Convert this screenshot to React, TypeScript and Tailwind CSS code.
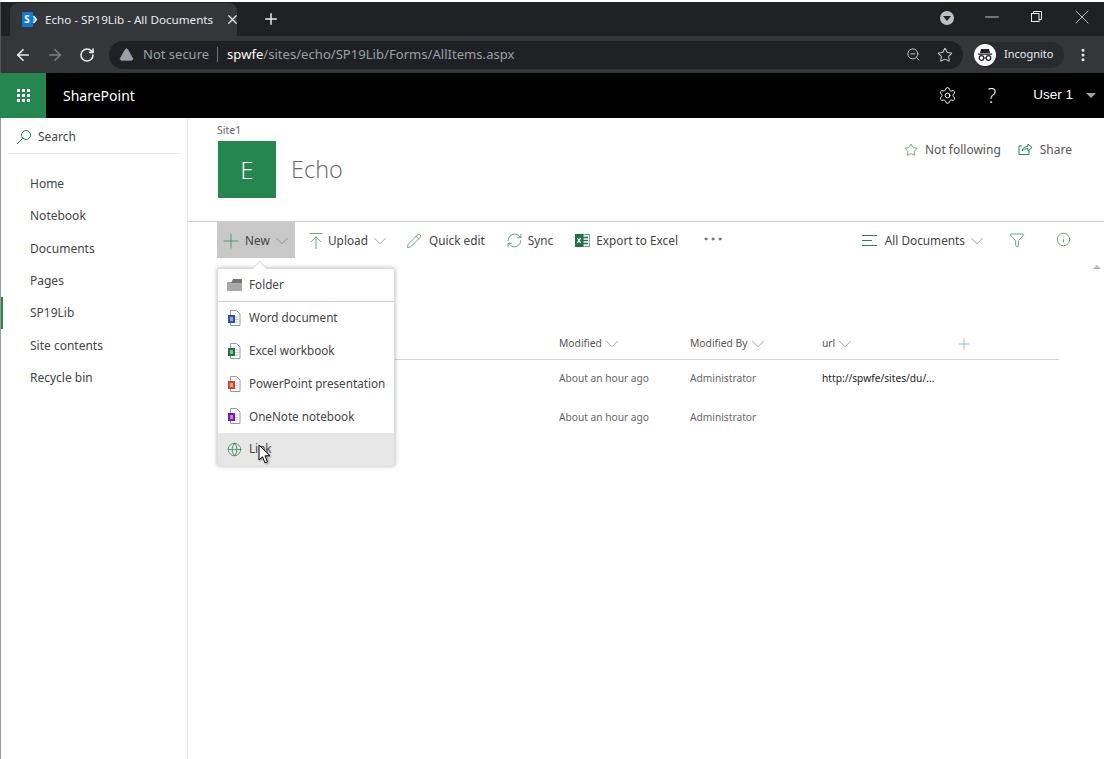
import React from 'react';
import { ArrowLeft, ArrowRight, RotateCw, TriangleAlert, ZoomOut, Star, X, Plus, Minus, EllipsisVertical, Settings, ChevronDown, ArrowUpToLine, Pencil, RefreshCw, Filter, Info, Globe, Ellipsis } from 'lucide-react';

const font = 'font-["Noto_Sans","Open_Sans",sans-serif]';

const navItems = [
  { label: 'Home', top: 'h-[32px]' },
  { label: 'Notebook', top: 'h-[32px]' },
  { label: 'Documents', top: 'h-[33px]' },
  { label: 'Pages', top: 'h-[32px]' },
  { label: 'SP19Lib', top: 'h-[32px]', active: true },
  { label: 'Site contents', top: 'h-[33px]' },
  { label: 'Recycle bin', top: 'h-[32px]' },
];

const DocIcon = ({ color }: { color: string }) => (
  <svg width="14" height="16" viewBox="0 0 14 16" fill="none">
    <path d="M3.500 .5h6l3.500 3.500v11.500h-9.500z" fill="#fff" stroke="#9a9a9a" />
    <path d="M8 7h3.500M8 9.500h3.500M8 12h3.500" stroke="#c8c8c8" />
    <rect x="1" y="5" width="7" height="8" fill={color} />
    <rect x="3" y="7" width="3" height="4" fill="#fff" opacity="0.5" />
  </svg>
);

const ExcelIcon = () => (
  <svg width="15" height="15" viewBox="0 0 15 15">
    <rect x="5" y="1.500" width="9.500" height="12" fill="#fff" stroke="#7f9f8c" />
    <path d="M8 4.500h5M8 7.500h5M8 10.500h5" stroke="#217346" strokeWidth="1.500" />
    <rect x="0" y="1" width="8.500" height="13" fill="#217346" />
    <path d="M2.300 5l3.400 5M5.700 5l-3.400 5" stroke="#fff" strokeWidth="1.300" />
  </svg>
);

const MenuItem = ({ icon, label, hover, border }: { icon: React.ReactNode; label: string; hover?: boolean; border?: boolean }) => (
  <div className={`flex items-center h-[32.750px] pl-[9px] text-[11.700px] whitespace-nowrap text-[#444444] ${hover ? 'bg-[#e6e6e6]' : ''} ${border ? 'border-b border-[#d0d0d0]' : ''}`}>
    <span className="w-[22px] flex items-center">{icon}</span>
    {label}
  </div>
);

const ColHead = ({ label, w }: { label: string; w: string }) => (
  <div className={`${w} flex items-center text-[10.300px] text-[#555555]`}>
    {label}
    <ChevronDown size={22} strokeWidth={0.7} className="-ml-[1px] -my-[4px] text-[#777777]" />
  </div>
);

const Row = ({ url, h }: { url?: string; h: string }) => (
  <div className={`flex items-center ${h} pl-[342px] text-[10.200px] text-[#666666]`}>
    <div className="w-[131px]">About an hour ago</div>
    <div className="w-[132px]">Administrator</div>
    {url && <div className="text-[#222222]">{url}</div>}
  </div>
);

const ToolButton = ({ icon, label, chevron, className }: { icon: React.ReactNode; label: string; chevron?: boolean; className?: string }) => (
  <div className={`flex items-center h-full pt-[1px] text-[11.800px] text-[#444444] ${className || ''}`}>
    {icon}
    <span>{label}</span>
    {chevron && <ChevronDown size={22} strokeWidth={0.75} className="ml-[1px] text-[#777777]" />}
  </div>
);

export default function App() {
  return (
    <div className={`${font} w-[1104px] h-[759px] overflow-hidden bg-white flex flex-col relative`}>
      {/* browser chrome */}
      <div className="h-[2px] bg-white" />
      <div className="h-[34px] bg-[#202124] flex items-end pl-[9px] border-l border-[#555555]">
        <div className="w-[227px] h-[33px] bg-[#35363a] rounded-t-[8px] flex items-center pl-[11px] text-white">
          <svg width="17" height="17" viewBox="0 0 17 17" className="shrink-0">
            <path d="M9 3l7 5.500-7 5.500z" fill="#37c6d0" />
            <rect x="1" y="1" width="11" height="15" rx="1" fill="#0f78d4" />
            <text x="3.200" y="12" fontSize="10" fontWeight="700" fill="#fff">S</text>
            <path d="M12.500 5l3 3.500-3 3.500" stroke="#fff" strokeWidth="1.300" fill="none" />
          </svg>
          <span className="ml-[7px] text-[11.650px] whitespace-nowrap text-[#e8eaed]">Echo - SP19Lib - All Documents</span>
          <X size={15} strokeWidth={2} className="ml-[12px] shrink-0 text-[#e8eaed]" />
        </div>
        <Plus size={18} strokeWidth={2} className="ml-[25px] mb-[8px] text-[#e8eaed]" />
        <div className="flex-1" />
        <div className="h-full flex items-center mb-[1px]">
          <div className="w-[14px] h-[14px] rounded-full bg-[#bdc1c6] flex items-center justify-center mr-[27px]">
            <div className="w-0 h-0 border-l-[4px] border-r-[4px] border-t-[5px] border-l-transparent border-r-transparent border-t-[#202124]" />
          </div>
          <Minus size={22} strokeWidth={0.9} className="text-[#e8eaed] mr-[28px] -mt-[3px]" />
          <svg width="11" height="11" viewBox="0 0 11 11" fill="none" stroke="#e8eaed" className="mr-[28px] -mt-[3px]">
            <rect x=".5" y="2.500" width="7.500" height="8" />
            <path d="M2.500 2.500v-2h8v8h-2.500" />
          </svg>
          <X size={24} strokeWidth={0.8} className="text-[#e8eaed] mr-[10px] -mt-[3px]" />
        </div>
      </div>
      <div className="h-[37px] bg-[#35363a] flex items-center border-l border-[#555555]">
        <ArrowLeft size={18} strokeWidth={2.200} className="ml-[13px] text-[#e8eaed]" />
        <ArrowRight size={18} strokeWidth={2.200} className="ml-[14px] text-[#7c7f83]" />
        <RotateCw size={16} strokeWidth={2.400} className="ml-[15px] text-[#e8eaed]" />
        <div className="ml-[14px] w-[854px] h-[28px] rounded-full bg-[#202124] flex items-center pl-[10px] text-[13px] whitespace-nowrap">
          <TriangleAlert size={15} fill="#9aa0a6" strokeWidth={1.500} className="text-[#9aa0a6]" />
          <span className="ml-[9px] text-[#9aa0a6]">Not secure</span>
          <span className="ml-[8px] mr-[9px] h-[15px] w-px bg-[#70757a]" />
          <span className="text-[13.100px] text-white">spwfe</span>
          <span className="text-[13.100px] text-[#9aa0a6]">/sites/echo/SP19Lib/Forms/AllItems.aspx</span>
          <div className="flex-1" />
          <ZoomOut size={15} strokeWidth={1.600} className="text-[#bdc1c6]" />
          <Star size={16} strokeWidth={1.600} className="ml-[16px] mr-[10px] text-[#bdc1c6]" />
        </div>
        <div className="ml-[11px] w-[90px] h-[26px] rounded-full bg-[#292a2d] flex items-center text-[11px] text-[#e8eaed]">
          <div className="w-[22px] h-[22px] rounded-full bg-white flex items-center justify-center shrink-0">
            <svg width="16" height="14" viewBox="0 0 16 14">
              <path d="M4 1h8l1 4H3z" fill="#202124" />
              <rect x="1" y="5.500" width="14" height="1.300" fill="#202124" />
              <circle cx="4.500" cy="10" r="2.300" fill="none" stroke="#202124" strokeWidth="1.200" />
              <circle cx="11.500" cy="10" r="2.300" fill="none" stroke="#202124" strokeWidth="1.200" />
              <path d="M6.800 10h2.400" stroke="#202124" />
            </svg>
          </div>
          <span className="ml-[8px]">Incognito</span>
        </div>
        <EllipsisVertical size={16} strokeWidth={2.500} className="ml-[11px] text-[#e8eaed]" />
      </div>

      {/* suite bar */}
      <div className="h-[45px] bg-black flex items-center text-white shrink-0">
        <div className="w-[46px] h-full bg-[#25874f] flex items-center justify-center">
          <div className="grid grid-cols-3 gap-[2px]">
            {Array.from({ length: 9 }).map((_, i) => (
              <div key={i} className="w-[3px] h-[3px] bg-white" />
            ))}
          </div>
        </div>
        <span className="ml-[17px] text-[14px]">SharePoint</span>
        <div className="flex-1" />
        <Settings size={19} strokeWidth={1.200} />
        <span className="ml-[31px] text-[20px] font-light font-['Open_Sans',sans-serif]">?</span>
        <span className="ml-[37px] text-[13.500px] font-['Liberation_Sans',sans-serif]">User 1</span>
        <div className="ml-[13px] mr-[8px] w-0 h-0 border-l-[5px] border-r-[5px] border-t-[5px] border-l-transparent border-r-transparent border-t-[#a0a0a0]" />
      </div>

      <div className="flex-1 flex min-h-0 border-l border-[#9a9a9a]">
        {/* left nav */}
        <div className="w-[187px] shrink-0 border-r border-[#e4e4e4] flex flex-col">
          <div className="mx-[7px] h-[36px] pt-[3px] flex items-center border-b border-[#eaeaea] text-[12px] text-[#444444] pl-[8px]">
            <svg width="16" height="16" viewBox="0 0 16 16" fill="none" stroke="#25874f" strokeWidth="1">
              <circle cx="10" cy="6" r="4.500" />
              <path d="M6.800 9.200L1 15" />
            </svg>
            <span className="ml-[6px]">Search</span>
          </div>
          <div className="mt-[14px] flex flex-col">
            {navItems.map((item) => (
              <div key={item.label} className={`${item.top} flex items-center text-[12px] text-[#444444] ${item.active ? 'border-l-2 border-[#25874f] pl-[27px]' : 'pl-[29px]'}`}>
                {item.label}
              </div>
            ))}
          </div>
        </div>

        {/* main */}
        <div className="flex-1 min-w-0 flex flex-col">
          <div className="h-[104px] shrink-0 border-b border-[#d0d0d0] flex pl-[29px] pr-[32px]">
            <div>
              <div className="mt-[5px] h-[16px] text-[10.500px] text-[#666666]">Site1</div>
              <div className="mt-[2px] ml-[1px] w-[58px] h-[57px] bg-[#25874f] flex items-center justify-center text-white text-[24px] font-light font-['Open_Sans',sans-serif]">E</div>
            </div>
            <div className="ml-[15px] mt-[33px] text-[23.500px] font-light font-['Open_Sans',sans-serif] text-[#666666] h-fit leading-[36px]">Echo</div>
            <div className="flex-1" />
            <div className="flex items-start pt-[23px] text-[12px] text-[#555555]">
              <Star size={14} strokeWidth={1.200} className="mt-[2px] -ml-[1px] text-[#25874f]" />
              <span className="ml-[7px]">Not following</span>
              <svg width="15" height="14" viewBox="0 0 15 14" fill="none" stroke="#25874f" className="ml-[17px] mt-[1px]">
                <path d="M11 8.500v4H1V4h3" />
                <path d="M4 9c.5-3 3-4.500 6-4.500V2l4 3.500L10 9V6.500C7.500 6.500 5.500 7.500 4 9z" />
              </svg>
              <span className="ml-[7px]">Share</span>
            </div>
          </div>

          <div className="h-[36px] shrink-0 flex items-center pl-[29px] pr-[33px]">
            <ToolButton className="w-[78px] bg-[#c8c8c8] pl-[2px]" icon={<Plus size={24} strokeWidth={0.7} className="mr-[2px] text-[#25874f]" />} label="New" chevron />
            <ToolButton className="ml-[11px]" icon={<ArrowUpToLine size={20} strokeWidth={0.85} className="mr-[2px] text-[#25874f]" />} label="Upload" chevron />
            <ToolButton className="ml-[15px]" icon={<Pencil size={16} strokeWidth={1} className="mr-[7px] text-[#25874f]" />} label="Quick edit" />
            <ToolButton className="ml-[21px]" icon={<RefreshCw size={17} strokeWidth={1} className="mr-[5px] text-[#25874f]" />} label="Sync" />
            <ToolButton className="ml-[22px]" icon={<span className="mr-[6px]"><ExcelIcon /></span>} label="Export to Excel" />
            <Ellipsis size={24} strokeWidth={1} className="ml-[23px] -mt-[2px] text-[#555555]" />
            <div className="flex-1" />
            <svg width="15" height="11" viewBox="0 0 15 11" fill="none" stroke="#25874f" className="mr-[8px]">
              <path d="M0 .5h15M0 5.500h10M0 10.500h15" />
            </svg>
            <ToolButton icon={null} label="All Documents" chevron />
            <Filter size={16} strokeWidth={1.100} className="ml-[21px] text-[#25874f]" />
            <Info size={15} strokeWidth={1.100} className="ml-[31px] -mt-[1px] text-[#25874f]" />
          </div>

          <div className="relative flex-1">
            <div className="absolute top-[7px] right-[3px] w-0 h-0 border-l-[4px] border-r-[4px] border-b-[4px] border-l-transparent border-r-transparent border-b-[#b5b5b5]" />
            <div className="mt-[73px] ml-[29px] w-[842px] h-[29px] flex items-center pl-[342px] border-b border-[#d4d4d4] pb-[3px]">
              <ColHead label="Modified" w="w-[131px]" />
              <ColHead label="Modified By" w="w-[132px]" />
              <ColHead label="url" w="w-[133px]" />
              <Plus size={18} strokeWidth={0.8} className="text-[#5b8fc0]" />
            </div>
            <div className="ml-[29px]">
              <Row url="http://spwfe/sites/du/..." h="h-[38px]" />
              <Row h="h-[40px]" />
            </div>

            {/* New menu */}
            <div className="absolute left-[29px] top-[10px] w-[178px] h-[198px] bg-white border border-[#dcdcdc] rounded-[2px] shadow-[0_0_4px_rgba(0,0,0,0.3)]">
              <div className="absolute -top-[6px] left-[36px] w-[11px] h-[11px] rotate-45 bg-white border-l border-t border-[#dcdcdc]" />
              <div className="relative">
                <MenuItem
                  border
                  label="Folder"
                  icon={
                    <svg width="15" height="12" viewBox="0 0 15 12">
                      <path d="M0 3h15v9H0z" fill="#a8a8a8" />
                      <path d="M6 0h9v4H4z" fill="#767676" />
                    </svg>
                  }
                />
                <MenuItem label="Word document" icon={<DocIcon color="#2b579a" />} />
                <MenuItem label="Excel workbook" icon={<DocIcon color="#217346" />} />
                <MenuItem label="PowerPoint presentation" icon={<DocIcon color="#d24726" />} />
                <MenuItem label="OneNote notebook" icon={<DocIcon color="#7719aa" />} />
                <MenuItem hover label="Link" icon={<Globe size={15} strokeWidth={1.200} className="text-[#25874f]" />} />
              </div>
            </div>

            {/* cursor */}
            <svg width="16" height="22" viewBox="0 0 16 22" className="absolute left-[70px] top-[186px]" style={{ filter: 'drop-shadow(1px 1px 1px rgba(0,0,0,0.35))' }}>
              <path d="M1 1v15l3.500-3.200 2.500 6 2.500-1-2.500-6h5z" fill="#fff" stroke="#000" strokeWidth="1" />
            </svg>
          </div>
        </div>
      </div>
    </div>
  );
}
